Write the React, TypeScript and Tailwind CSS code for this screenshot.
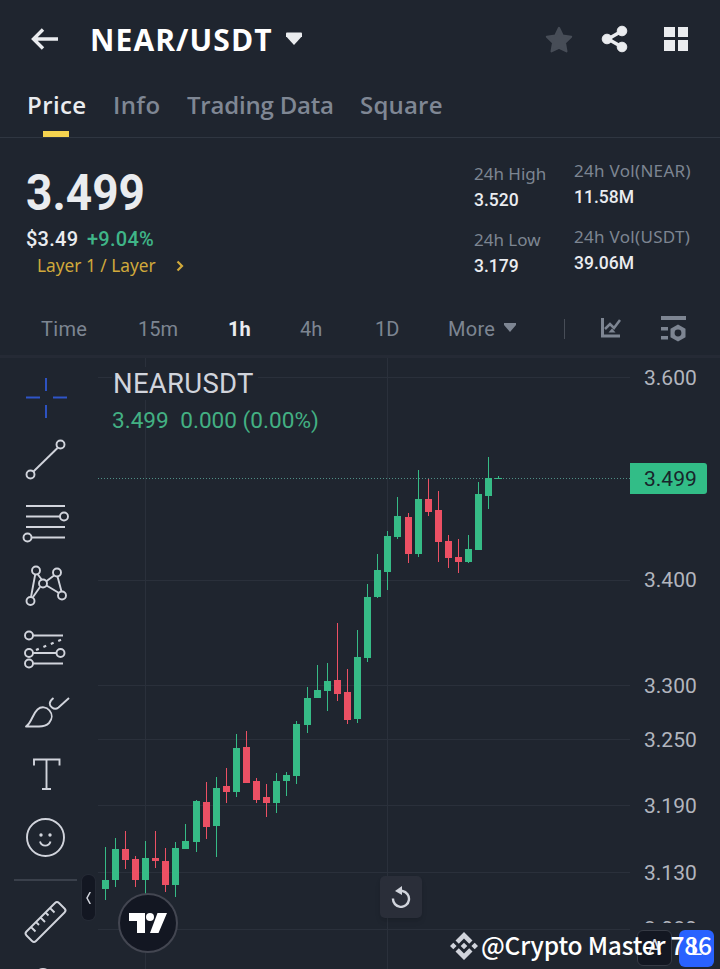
import type { ReactNode } from 'react';

type Candle = [x: number, top: number, bottom: number, high: number, low: number, up: 0 | 1];

const CANDLES: Candle[] = [
  [105, 880, 889, 847, 900, 1],
  [115, 849, 880, 838, 887, 1],
  [125, 849, 860, 831, 869, 0],
  [135, 859, 880, 856, 887, 0],
  [145, 858, 880, 841, 895, 1],
  [155, 858, 861, 831, 868, 0],
  [165, 861, 885, 848, 892, 0],
  [175, 848, 885, 842, 897, 1],
  [185, 841, 849, 824, 849, 1],
  [196, 801, 842, 800, 852, 1],
  [206, 802, 827, 782, 839, 0],
  [216, 788, 826, 777, 857, 1],
  [226, 786, 792, 768, 803, 0],
  [236, 748, 792, 734, 797, 1],
  [246, 747, 783, 731, 783, 0],
  [256, 781, 800, 778, 803, 0],
  [266, 797, 803, 784, 817, 0],
  [276, 781, 803, 773, 813, 1],
  [286, 775, 781, 772, 796, 1],
  [296, 724, 776, 721, 784, 1],
  [307, 698, 725, 687, 733, 1],
  [317, 690, 698, 665, 698, 1],
  [327, 681, 691, 663, 711, 1],
  [337, 680, 694, 623, 701, 0],
  [347, 692, 720, 669, 724, 0],
  [357, 657, 719, 630, 723, 1],
  [367, 597, 658, 584, 662, 1],
  [377, 570, 597, 554, 598, 1],
  [387, 536, 572, 531, 590, 1],
  [397, 516, 537, 497, 539, 1],
  [408, 517, 554, 513, 563, 0],
  [418, 499, 554, 470, 557, 1],
  [428, 499, 512, 479, 516, 0],
  [438, 510, 542, 491, 562, 0],
  [448, 541, 558, 535, 568, 0],
  [458, 557, 562, 539, 573, 0],
  [468, 549, 562, 535, 563, 1],
  [478, 494, 550, 482, 550, 1],
  [488, 478, 496, 457, 509, 1],
  [498, 478, 479, 476, 479, 1],
];

const GRID_Y = [377, 580, 685, 739, 805, 872, 929];

const AXIS = [
  { label: '3.600', y: 377 },
  { label: '3.400', y: 579 },
  { label: '3.300', y: 685 },
  { label: '3.250', y: 739 },
  { label: '3.190', y: 805 },
  { label: '3.130', y: 872 },
];

function Header() {
  return (
    <header className="flex h-[77px] items-center pl-[31px] pr-[32px]">
      <svg className="h-[22px] w-[27px] shrink-0" viewBox="0 0 27 22" fill="none" stroke="#eaecef" strokeWidth="3.4">
        <path d="M2.5 11H27M12 1.5L2.5 11l9.5 9.5" />
      </svg>
      <h1 className="ml-[32px] mt-[3px] w-[182px] whitespace-nowrap font-['Open_Sans',sans-serif] text-[30px] font-bold leading-none tracking-[1.100px] text-white">
        NEAR/USDT
      </h1>
      <svg className="ml-[14px] h-[14px] w-[16px]" viewBox="0 0 17 14" fill="#eaecef">
        <path d="M1 0h15q1 0 1 1v3L8.500 13.500 0 4V1q0-1 1-1z" />
      </svg>
      <svg className="ml-auto mt-[2px] h-[28px] w-[28px]" viewBox="0 0 28 28" fill="#474d57" stroke="#474d57" strokeWidth="2" strokeLinejoin="round">
        <path d="M14 1.800l3.700 7.700 8.500 1.200-6.200 6 1.500 8.700-7.500-3.500-7.500 3.500L8 16.700l-6.200-6 8.500-1.200z" />
      </svg>
      <svg className="ml-[28px] h-[28px] w-[28px]" viewBox="0 0 28 28" fill="#eaecef" stroke="#eaecef">
        <path d="M21 6L7 14l14 8" fill="none" strokeWidth="3.500" />
        <circle cx="21" cy="6" r="4.800" />
        <circle cx="6" cy="14" r="4.800" />
        <circle cx="21" cy="22" r="4.800" />
      </svg>
      <div className="ml-[35px] grid grid-cols-2 gap-[3px]">
        {[0, 1, 2, 3].map((i) => (
          <span key={i} className="h-[10.500px] w-[10.500px] bg-[#eaecef]" />
        ))}
      </div>
    </header>
  );
}

function Tabs() {
  return (
    <nav className="relative flex h-[61px] border-b border-[#2f3641] pl-[27px] pt-[10px] font-['Open_Sans',sans-serif] text-[24px] font-semibold leading-[36px] text-[#7f8794]">
      <span className="w-[86px] whitespace-nowrap tracking-[0.400px] text-[#eaecef]">Price</span>
      <span className="w-[74px] whitespace-nowrap tracking-[0.400px]">Info</span>
      <span className="w-[173px] whitespace-nowrap tracking-[-0.200px]">Trading Data</span>
      <span className="tracking-[0.200px]">Square</span>
      <span className="absolute bottom-0 left-[43px] h-[6px] w-[26px] bg-[#f5d34f]" />
    </nav>
  );
}

function Stat({ label, value }: { label: string; value: string }) {
  return (
    <div className="h-[66px] whitespace-nowrap">
      <div className="font-['Noto_Sans',sans-serif] text-[17px] leading-[26px] text-[#7d8592]">{label}</div>
      <div className="font-['Roboto',sans-serif] text-[17.500px] font-medium leading-[26px] tracking-normal text-[#eaecef]">{value}</div>
    </div>
  );
}

function Summary() {
  return (
    <section className="flex h-[164px] font-['Roboto',sans-serif]">
      <div className="w-[474px] pl-[26px] pt-[31px]">
        <div className="origin-left scale-x-[0.920] text-[50px] font-bold leading-[48px] text-[#eaecef]">3.499</div>
        <div className="mt-[8px] flex gap-[9px] text-[20px] font-medium leading-[28px] tracking-[0.250px]">
          <span className="w-[52px] text-[#eaecef]">$3.49</span>
          <span className="text-[#3fb588]">+9.04%</span>
        </div>
        <div className="flex items-center pl-[11px] font-['Noto_Sans',sans-serif] text-[17.300px] leading-[26px] text-[#d0a93b]">
          <span className="w-[139px] whitespace-nowrap">Layer 1 / Layer</span>
          <svg className="h-[12px] w-[8px]" viewBox="0 0 8 12" fill="none" stroke="currentColor" strokeWidth="2.200">
            <path d="M1.500 1.500L6 6l-4.500 4.500" />
          </svg>
        </div>
      </div>
      <div className="w-[100px] pt-[23px]">
        <Stat label="24h High" value="3.520" />
        <Stat label="24h Low" value="3.179" />
      </div>
      <div className="pt-[20px] tracking-[0.300px]">
        <Stat label="24h Vol(NEAR)" value="11.58M" />
        <Stat label="24h Vol(USDT)" value="39.06M" />
      </div>
    </section>
  );
}

function Intervals() {
  return (
    <div className="flex h-[53px] items-center pl-[41px] font-['Roboto',sans-serif] text-[20px] text-[#7d8592]">
      <span className="w-[97px] tracking-[0.300px]">Time</span>
      <span className="w-[90px]">15m</span>
      <span className="w-[72px] font-bold text-[#eaecef]">1h</span>
      <span className="w-[75px]">4h</span>
      <span className="w-[73px]">1D</span>
      <span className="w-[56px] tracking-[0.300px]">More</span>
      <svg className="mb-[2px] h-[9px] w-[12px]" viewBox="0 0 12 9" fill="#7d8592">
        <path d="M0 0h12v2L6 9 0 2z" />
      </svg>
      <span className="ml-[48px] h-[20px] w-px bg-[#474d57]" />
      <svg className="-mt-[2px] ml-[36px] h-[20px] w-[20px]" viewBox="0 0 20 20" fill="none" stroke="#7d8592">
        <path d="M1.500 0v18H19" strokeWidth="3" />
        <path d="M4 11l5-5 4 4 6-8" strokeWidth="2.500" />
        <path d="M11 10.500l3.500 4h-7z" fill="#7d8592" stroke="none" />
      </svg>
      <svg className="ml-[40px] h-[26px] w-[26px]" viewBox="0 0 26 26" fill="#7d8592">
        <path d="M0 0h25v4H0zM0 11h7v3.500H0zM0 20h7v3.500H0z" />
        <path fillRule="evenodd" d="M17 8.500l7.500 4.200v8.600L17 25.500l-7.500-4.200v-8.600zM17 13.600a3.400 3.400 0 1 0 0 6.800 3.400 3.400 0 0 0 0-6.800z" />
      </svg>
    </div>
  );
}

function Tool({ children }: { children: ReactNode }) {
  return (
    <svg className="h-[63px] w-[92px] shrink-0" viewBox="0 0 92 63" fill="none" stroke="#d1d4dc" strokeWidth="1.900">
      {children}
    </svg>
  );
}

function Toolbar() {
  return (
    <aside className="flex h-[614px] w-[98px] shrink-0 flex-col overflow-hidden pt-[10px]">
      <Tool>
        <path d="M46 13v13M46 40v13M26 32.500h14M53 32.500h14" stroke="#2f55c8" />
      </Tool>
      <Tool>
        <path d="M33.500 43.500L57.500 20" />
        <circle cx="30.500" cy="46.500" r="4" />
        <circle cx="60.500" cy="16.500" r="4" />
      </Tool>
      <Tool>
        <path d="M26 15h39M26 25.500h34M26 36h39M31 46.500h34" />
        <circle cx="64" cy="25.500" r="4" />
        <circle cx="27.500" cy="46.500" r="4" />
      </Tool>
      <Tool>
        <path d="M35.200 20.500L31 43M37.500 20l4.500 6M46 27.500l8-6M57.500 22.500L61.500 37.500M46.500 31.500L59 39M40 33l-7 10" />
        <circle cx="36" cy="16.500" r="4" />
        <circle cx="57" cy="18.500" r="4" />
        <circle cx="43" cy="29.500" r="4" />
        <circle cx="30.500" cy="47" r="4" />
        <circle cx="62" cy="41.500" r="4" />
      </Tool>
      <Tool>
        <path d="M33 18.500h30M33 36h23M33 46.500h30" />
        <path d="M36 33l27-11" strokeWidth="2.200" strokeDasharray="3 5" />
        <circle cx="29" cy="18.500" r="4" />
        <circle cx="29" cy="36" r="4" />
        <circle cx="60.500" cy="36" r="4" />
        <circle cx="29" cy="46.500" r="4" />
      </Tool>
      <Tool>
        <path d="M26 46.500c6-4 6-12 11.500-17 4-3.500 9-2.500 12 1s3 8.500-.5 12.500c-3 3-6 3.500-10 3.500z" strokeLinejoin="round" />
        <path d="M53.500 18c-5 4-4.500 7-1.500 9.500 2.500 2 4 2 6.500 0L69 18" />
      </Tool>
      <Tool>
        <path d="M34 22.500v-6h25.500v6M46.500 16.500v29M42 46h9" />
      </Tool>
      <Tool>
        <circle cx="45.500" cy="31.500" r="18.500" />
        <path d="M40 35.500c1.500 5.500 9 5.500 10.500 0" />
        <circle cx="41" cy="29" r="1.700" fill="#d1d4dc" stroke="none" />
        <circle cx="50" cy="29" r="1.700" fill="#d1d4dc" stroke="none" />
      </Tool>
      <span className="ml-[14px] mt-[10px] h-[2px] w-[63px] shrink-0 bg-[#3a404b]" />
      <Tool>
        <path d="M26.500 50.500L55 22c1.500-1.500 2.500-1.500 4 0l5.500 5.500c1.500 1.500 1.500 2.500 0 4L36 60c-1.500 1.500-2.500 1.500-4 0L26.500 54.500c-1.500-1.500-1.500-2.500 0-4zM31 46l4.500 4.500M36 41l3 3M40.500 36.500L45 41M45.500 31.500l3 3M50 27l4.500 4.500" />
      </Tool>
      <Tool>
        <circle cx="43" cy="33" r="8" />
      </Tool>
    </aside>
  );
}

function Plot() {
  return (
    <svg className="absolute left-0 top-0 h-[614px] w-[720px]" viewBox="0 355 720 614" shapeRendering="crispEdges">
      {GRID_Y.map((y) => (
        <rect key={y} x={98} y={y} width={532} height={1} fill="#2a303b" />
      ))}
      <rect x={145} y={355} width={1} height={614} fill="#2a303b" />
      <rect x={387} y={355} width={1} height={614} fill="#2a303b" />
      <rect x={0} y={355} width={720} height={3} fill="#252a35" />
      <path d="M98 478.500H630" stroke="#4f8f86" strokeDasharray="1 2" />
      {CANDLES.map(([x, top, bottom, high, low, up]) => (
        <g key={x} fill={up ? '#36bb86' : '#ec5064'}>
          <rect x={x} y={high} width={1} height={low - high} />
          <rect x={x - 3} y={top} width={7} height={bottom - top} />
        </g>
      ))}
    </svg>
  );
}

function Chart() {
  return (
    <main className="relative flex h-[614px] overflow-hidden font-['Roboto',sans-serif]">
      <Plot />
      <Toolbar />
      <div className="relative flex-1 pl-[14px] pt-[12px]">
        <div className="w-[146px] bg-[#1f252f] pl-px text-[27.500px] leading-[33px] tracking-[0.300px] text-[#d1d4dc]">NEARUSDT</div>
        <div className="mt-[7px] flex gap-[11.500px] whitespace-nowrap text-[22.600px] leading-[28px] text-[#43b083]">
          <span>3.499</span>
          <span>0.000 (0.00%)</span>
        </div>
      </div>
      {AXIS.map(({ label, y }) => (
        <span
          key={label}
          className="absolute left-[644px] text-[21px] leading-[24px] text-[#b2b5be]"
          style={{ top: y - 355 - 11 }}
        >
          {label}
        </span>
      ))}
      {/* the next price label is mostly hidden by the bottom edge of the axis */}
      <span className="absolute left-[644px] top-[562px] h-[6px] overflow-hidden text-[21px] leading-[24px] text-[#b2b5be]">3.080</span>
      <span className="absolute left-[630px] top-[108px] h-[31px] w-[77px] rounded-r-[3px] bg-[#32bd87] pl-[14px] text-[21px] leading-[32px] text-[#18252b]">
        3.499
      </span>
      <span className="absolute left-[82px] top-[520px] flex h-[45px] w-[13px] items-center justify-center rounded-[6px] bg-[#131722] ring-1 ring-[#252a35]">
        <svg className="h-[12px] w-[5px]" viewBox="0 0 5 12" fill="none" stroke="#d1d4dc" strokeWidth="1.500">
          <path d="M4.300 0L1 6l3.300 6" />
        </svg>
      </span>
      <span className="absolute left-[118px] top-[538px] flex h-[60px] w-[60px] items-center justify-center rounded-full border-2 border-[#434651] bg-[#131722]">
        <svg className="h-[20px] w-[38px]" viewBox="0 0 38 20" fill="#fff">
          <path d="M0 0h16v20H8V8H0zM28.500 0H38l-8.500 20H21z" />
          <circle cx="21" cy="4" r="4" />
        </svg>
      </span>
      <span className="absolute left-[380px] top-[521px] flex h-[42px] w-[42px] items-center justify-center rounded-[5px] bg-[#2a2e39] shadow-md">
        <svg className="h-[22px] w-[20px]" viewBox="0 0 20 22" fill="none" stroke="#d1d4dc" strokeWidth="2.400">
          <path d="M9 5h2.500A8 8 0 1 1 2 12.500" />
          <path d="M4 5L11 0v9z" fill="#d1d4dc" stroke="none" />
        </svg>
      </span>
      <span className="absolute left-[637px] top-[575px] flex h-[36px] w-[35px] items-center justify-center rounded-[6px] border border-[#363a45] bg-[#131722] text-[21px] text-[#d1d4dc]">
        A
      </span>
      <span className="absolute left-[679px] top-[575px] flex h-[37px] w-[35px] items-center justify-center rounded-[6px] bg-[#2962ff] text-[21px] text-white">
        L
      </span>
      <div className="absolute left-[450px] top-[573px] flex items-center whitespace-nowrap">
        <svg className="h-[28px] w-[28px]" viewBox="0 0 28 28" fill="#d1d4dc">
          <path d="M14 0l8.500 8.500-3.300 3.300L14 6.600l-5.200 5.200-3.300-3.300zM14 28l-8.500-8.500 3.300-3.300 5.200 5.200 5.200-5.200 3.300 3.300zM3.300 10.700L6.600 14l-3.300 3.300L0 14zM24.700 10.700L28 14l-3.300 3.300-3.300-3.300zM14 10.700l3.300 3.300-3.300 3.300-3.300-3.300z" />
        </svg>
        <span className="-mt-px ml-[3px] font-['Noto_Sans_CJK_SC',sans-serif] text-[24.500px] font-medium leading-[36px] tracking-[-0.200px] text-white">@Crypto Master 786</span>
      </div>
    </main>
  );
}

export default function App() {
  return (
    <div className="h-[969px] w-[720px] overflow-hidden bg-[#1f252f]">
      <Header />
      <Tabs />
      <Summary />
      <Intervals />
      <Chart />
    </div>
  );
}
